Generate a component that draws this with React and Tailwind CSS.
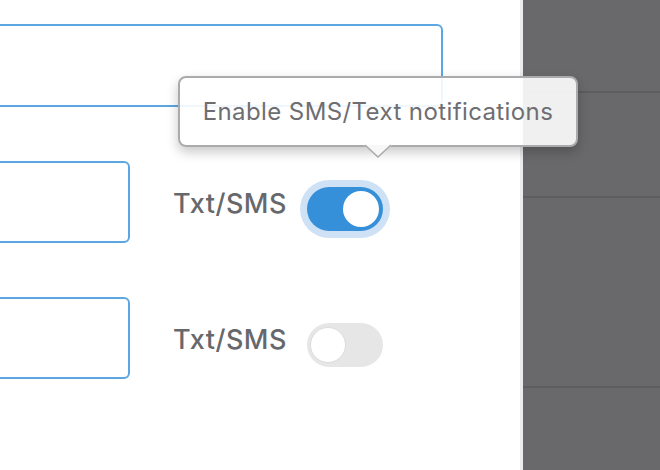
import React from "react";

function Toggle({ on }) {
  return (
    <div
      className={
        "relative w-[76px] h-[44px] rounded-full " +
        (on ? "bg-[#3590d9] shadow-[0_0_0_7px_#cfe2f5]" : "bg-[#e6e6e6]")
      }
    >
      <div
        className={
          "absolute top-[4px] w-[36px] h-[36px] rounded-full bg-white " +
          (on ? "left-[36px]" : "left-[3px] border border-[#dcdcdc]")
        }
      />
    </div>
  );
}

function Row({ on }) {
  return (
    <div className="flex items-center">
      <div className="ml-[-10px] w-[140px] h-[82px] border-2 border-[#5ba6e3] rounded-md" />
      <div className="ml-[43px] w-[134px] mt-[4px] text-[27px] font-medium text-[#67686c] tracking-[0.5px]">
        Txt/SMS
      </div>
      <div className="mt-[14px]">
        <Toggle on={on} />
      </div>
    </div>
  );
}

export default function App() {
  return (
    <div
      className="relative w-[660px] h-[470px] flex overflow-hidden bg-white"
      style={{ fontFamily: "Inter, 'Noto Sans', sans-serif" }}
    >
      <div className="w-[523px] h-full border-r-[3px] border-[#ececf0] bg-white pt-[24px] flex flex-col gap-[54px]">
        <div className="ml-[-10px] w-[453px] h-[83px] border-2 border-[#5ba6e3] rounded-md" />
        <Row on />
        <Row on={false} />
      </div>
      <div className="flex-1 bg-[#69696b] flex flex-col">
        <div className="h-[93px] border-b-2 border-[#5d5d5f]" />
        <div className="h-[105px] border-b-2 border-[#5d5d5f]" />
        <div className="h-[190px] border-b-2 border-[#5d5d5f]" />
      </div>

      <div className="absolute left-[178px] top-[76px] w-[400px] h-[71px]">
        <div className="w-full h-full rounded-lg border-2 border-[#aaaaac] bg-white/90 shadow-[0_5px_12px_rgba(0,0,0,0.22)] flex items-center justify-center">
          <span className="text-[24px] text-[#6e6e72] tracking-[0.4px]">
            Enable SMS/Text notifications
          </span>
        </div>
        <svg
          className="absolute left-[186px] top-[67px]"
          width="28"
          height="16"
          viewBox="0 0 28 16"
        >
          <path d="M0 2 L13.5 2 L14 2 L28 2 L14 14 Z" fill="#f7f7f7" />
          <path d="M1 2 L14 14 L27 2" fill="none" stroke="#aaaaac" strokeWidth="1.6" />
        </svg>
      </div>
    </div>
  );
}
